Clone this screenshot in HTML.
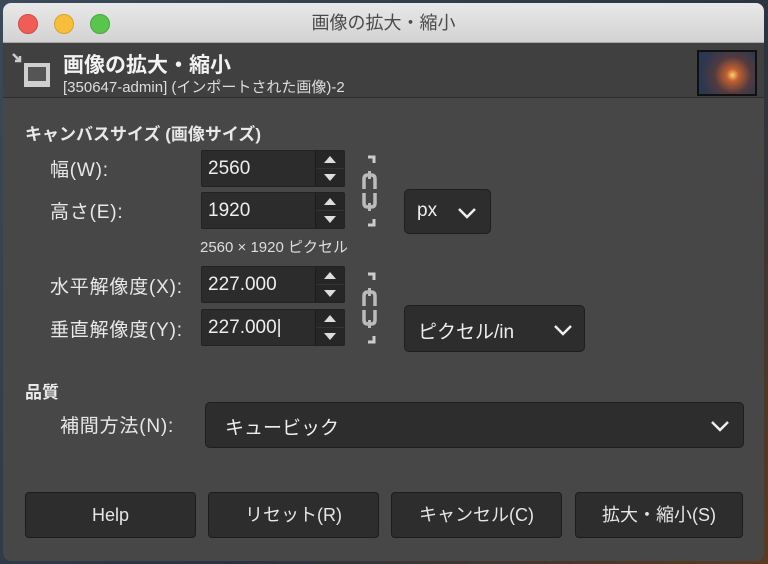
<!DOCTYPE html>
<html><head><meta charset="utf-8"><style>
*{margin:0;padding:0;box-sizing:border-box}
body{width:768px;height:564px;overflow:hidden;background:linear-gradient(135deg,#3a4a5a,#2b3340 60%,#5a3a20);font-family:"Liberation Sans","Noto Sans CJK JP",sans-serif;position:relative}
.win{position:absolute;left:3px;top:3px;width:761px;height:558px;background:#474747;border-radius:8px;overflow:hidden}
.tb{position:absolute;left:0;top:0;width:100%;height:40px;background:linear-gradient(#e8e8e8,#d3d3d3);border-bottom:1px solid #a8a8a8;text-align:center;line-height:40px;font-size:18px;color:#4a4a4a}
.dot{position:absolute;top:11px;width:20px;height:20px;border-radius:50%}
.hd{position:absolute;left:0;top:40px;width:100%;height:55px;background:#404040;border-bottom:1px solid #2e2e2e}
.a{position:absolute;color:#e8e8e8;white-space:nowrap}
.l{font-size:19px;letter-spacing:0.8px}
.inp{position:absolute;width:144px;height:37px;background:#2c2c2c;border:1px solid #222;border-radius:2px}
.inp .v{position:absolute;left:6px;top:7px;font-size:19px;color:#eee}
.inp .sp{position:absolute;right:0;top:0;width:29px;height:100%;background:#262626;border-left:1px solid #1c1c1c}
.sp div{height:50%;display:flex;align-items:center;justify-content:center;border-bottom:1px solid #333}
.dd{position:absolute;background:#2d2d2d;border:1px solid #1e1e1e;border-radius:5px;color:#eee;font-size:19px}
.btn{position:absolute;top:489px;height:46px;background:#2d2d2d;border:1px solid #1c1c1c;border-radius:4px;color:#e6e6e6;font-size:18px;text-align:center;line-height:44px}
</style></head><body>
<div class="win">
<div class="tb">画像の拡大・縮小
<div class="dot" style="left:15px;background:#ee5e57;border:1px solid #d04a44"></div>
<div class="dot" style="left:51px;background:#f6be3b;border:1px solid #d9a02c"></div>
<div class="dot" style="left:87px;background:#5ac54c;border:1px solid #45a83b"></div>
</div>
<div class="hd">
<svg style="position:absolute;left:7px;top:8px" width="45" height="45" viewBox="0 0 45 45"><path d="M3 3 L10 10 M10 5 V10 H5" stroke="#ccc" stroke-width="2.5" fill="none"/><rect x="14" y="12" width="26" height="24" fill="#cfcfcf"/><rect x="18" y="16" width="18" height="14" fill="#555"/></svg>
<div class="a" style="left:60px;top:6px;font-size:21px;font-weight:bold;color:#f2f2f2">画像の拡大・縮小</div>
<div class="a" style="left:60px;top:33px;font-size:15px;color:#ddd">[350647-admin] (インポートされた画像)-2</div>
<div style="position:absolute;left:694px;top:7px;width:60px;height:46px;border:2px solid #111;background:radial-gradient(circle at 60% 55%,#ffd070 0,#c06030 15%,#503a40 45%,#2a3850 80%)"></div>
</div>
<div class="a" style="left:22px;top:117px;font-size:17px;font-weight:bold">キャンバスサイズ (画像サイズ)</div>
<div class="a l" style="left:47px;top:152px">幅(W):</div>
<div class="a l" style="left:47px;top:194px">高さ(E):</div>
<div class="inp" style="left:198px;top:147px"><div class="v">2560</div><div class="sp"><div><svg width="12" height="7"><path d="M0 7L6 0L12 7Z" fill="#ddd"/></svg></div><div style="border:0"><svg width="12" height="7"><path d="M0 0L6 7L12 0Z" fill="#ddd"/></svg></div></div></div>
<div class="inp" style="left:198px;top:189px"><div class="v">1920</div><div class="sp"><div><svg width="12" height="7"><path d="M0 7L6 0L12 7Z" fill="#ddd"/></svg></div><div style="border:0"><svg width="12" height="7"><path d="M0 0L6 7L12 0Z" fill="#ddd"/></svg></div></div></div>
<div class="a" style="left:197px;top:233px;font-size:15px;color:#ddd">2560 × 1920 ピクセル</div>
<svg style="position:absolute;left:353px;top:150px" width="26" height="76" viewBox="0 0 26 76"><path d="M12 4H18V10 M12 72H18V66" stroke="#ccc" stroke-width="3" fill="none"/><path d="M8 36V26Q8 22 12 22H15Q19 22 19 26V36 M8 40V50Q8 54 12 54H15Q19 54 19 50V40" stroke="#bbb" stroke-width="3.5" fill="none"/><path d="M13.5 18V26M13.5 50V58" stroke="#bbb" stroke-width="3"/></svg>
<div class="dd" style="left:401px;top:186px;width:87px;height:45px"><span style="position:absolute;left:12px;top:10px">px</span><svg style="position:absolute;left:52px;top:17px" width="20" height="12"><path d="M2 2L10 10L18 2" stroke="#eee" stroke-width="2.5" fill="none"/></svg></div>
<div class="a l" style="left:47px;top:269px">水平解像度(X):</div>
<div class="a l" style="left:47px;top:312px">垂直解像度(Y):</div>
<div class="inp" style="left:198px;top:263px"><div class="v">227.000</div><div class="sp"><div><svg width="12" height="7"><path d="M0 7L6 0L12 7Z" fill="#ddd"/></svg></div><div style="border:0"><svg width="12" height="7"><path d="M0 0L6 7L12 0Z" fill="#ddd"/></svg></div></div></div>
<div class="inp" style="left:198px;top:306px"><div class="v">227.000|</div><div class="sp"><div><svg width="12" height="7"><path d="M0 7L6 0L12 7Z" fill="#ddd"/></svg></div><div style="border:0"><svg width="12" height="7"><path d="M0 0L6 7L12 0Z" fill="#ddd"/></svg></div></div></div>
<svg style="position:absolute;left:353px;top:267px" width="26" height="76" viewBox="0 0 26 76"><path d="M12 4H18V10 M12 72H18V66" stroke="#ccc" stroke-width="3" fill="none"/><path d="M8 36V26Q8 22 12 22H15Q19 22 19 26V36 M8 40V50Q8 54 12 54H15Q19 54 19 50V40" stroke="#bbb" stroke-width="3.5" fill="none"/><path d="M13.5 18V26M13.5 50V58" stroke="#bbb" stroke-width="3"/></svg>
<div class="dd" style="left:401px;top:302px;width:181px;height:47px"><span style="position:absolute;left:13px;top:11px">ピクセル/in</span><svg style="position:absolute;left:148px;top:18px" width="20" height="12"><path d="M2 2L10 10L18 2" stroke="#eee" stroke-width="2.5" fill="none"/></svg></div>
<div class="a" style="left:22px;top:375px;font-size:17px;font-weight:bold">品質</div>
<div class="a l" style="left:57px;top:408px">補間方法(N):</div>
<div class="dd" style="left:202px;top:399px;width:539px;height:46px"><span style="position:absolute;left:19px;top:10px">キュービック</span><svg style="position:absolute;left:504px;top:17px" width="20" height="12"><path d="M2 2L10 10L18 2" stroke="#eee" stroke-width="2.5" fill="none"/></svg></div>
<div class="btn" style="left:22px;width:171px">Help</div>
<div class="btn" style="left:205px;width:171px">リセット(R)</div>
<div class="btn" style="left:388px;width:171px">キャンセル(C)</div>
<div class="btn" style="left:572px;width:168px">拡大・縮小(S)</div>
</div>
</body></html>
